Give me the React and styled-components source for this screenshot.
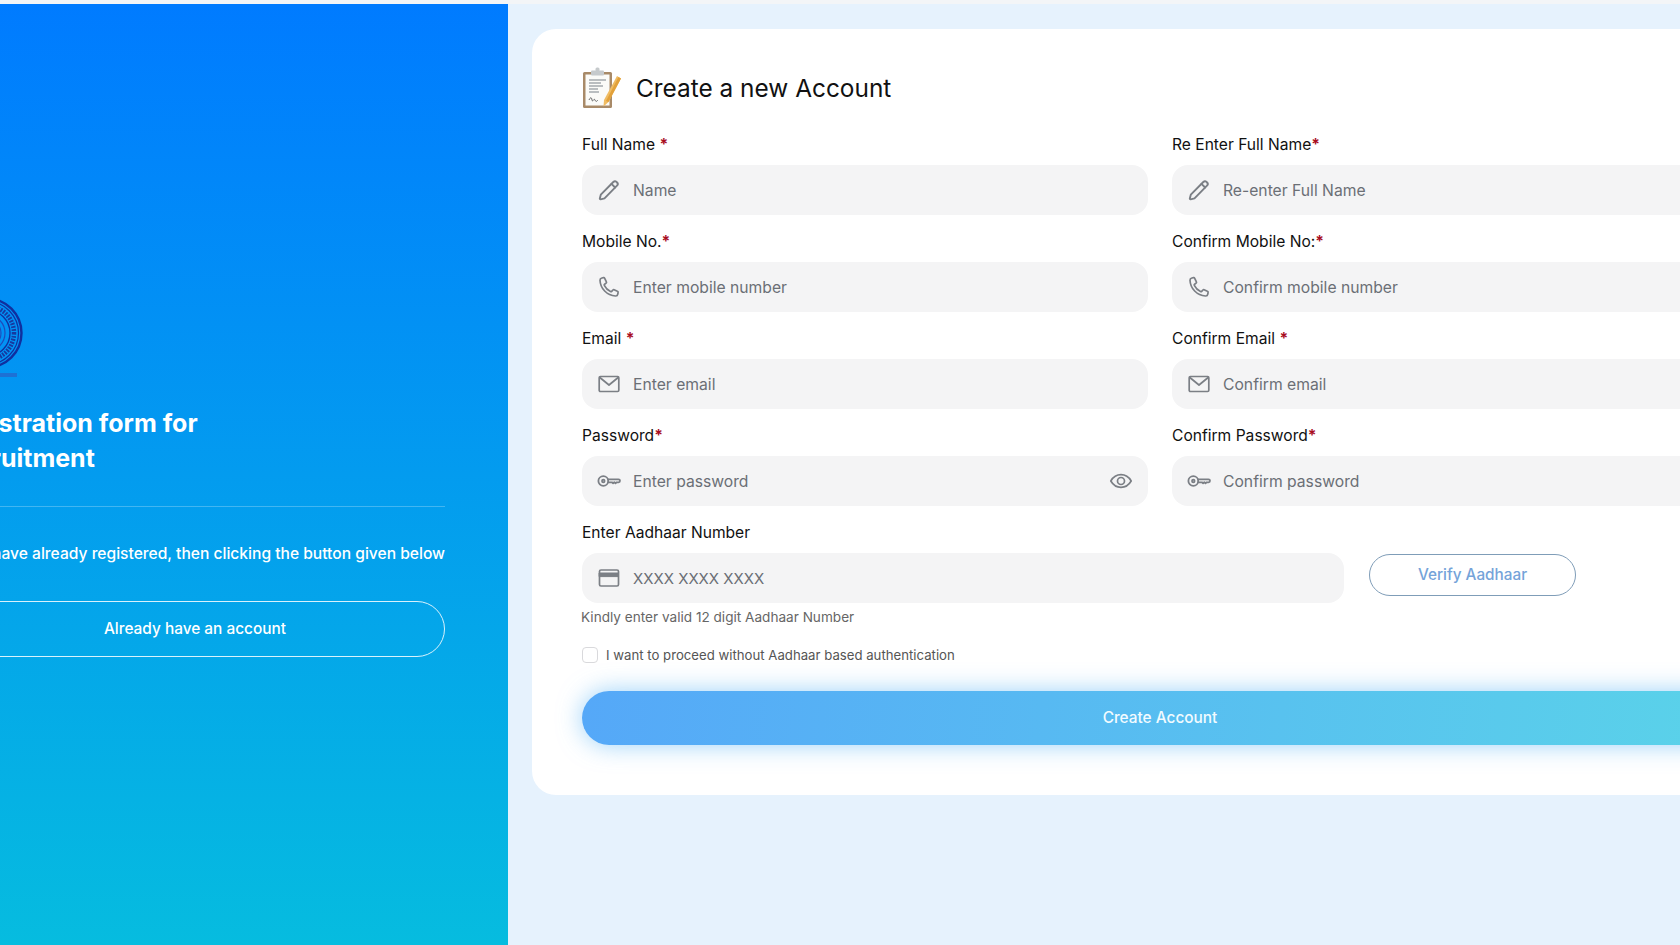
import styled, { createGlobalStyle } from "styled-components";

const GlobalStyle = createGlobalStyle`
    * {
        box-sizing: border-box;
    }

    html, body {
        margin: 0;
        padding: 0;
        height: 100%;
        overflow: hidden;
        background: #ffffff;
        font-family: Inter, "Noto Sans", sans-serif;
    }
`;

const stroke = { fill: "none", stroke: "#7b7f85", strokeWidth: 1.7, strokeLinecap: "round", strokeLinejoin: "round" };

function PencilIcon() {
    return (
        <FieldSvg viewBox="0 0 24 24" {...stroke} strokeWidth="1.9">
            <path d="M3.800 16.700 16.300 4c1-1 2.300-1 3.200-.1l.6.6c.9.900.9 2.200-.1 3.200L7.500 20.300l-3.900 1c-.5.1-.9-.3-.8-.8z" />
            <path d="m14.500 5.900 3.600 3.600" />
        </FieldSvg>
    );
}

function PhoneIcon() {
    return (
        <FieldSvg viewBox="0 0 24 24" {...stroke}>
            <path d="M3 5.200c0-1 .8-1.900 1.900-2.200l1.600-.3c.5-.1 1 .2 1.200.6l1.700 3.600c.2.400.1.900-.3 1.200L7.600 9.200c-.4.300-.5.800-.3 1.200 1.300 2.600 3.500 4.900 6.200 6.200.4.200.9.100 1.200-.2l1.200-1.400c.3-.4.800-.5 1.200-.3l3.300 1.600c.5.200.8.700.7 1.200l-.3 1.700c-.2 1.100-1.200 1.900-2.300 1.800C10 20.400 3.300 13.500 3 5.200z" />
        </FieldSvg>
    );
}

function MailIcon() {
    return (
        <FieldSvg viewBox="0 0 24 24" {...stroke}>
            <rect x="2.200" y="4.500" width="19.600" height="15" rx="1.200" />
            <path d="m2.800 5.500 9.200 7.500 9.200-7.500" />
        </FieldSvg>
    );
}

function KeyIcon() {
    return (
        <FieldSvg viewBox="0 0 24 24" {...stroke} strokeWidth="1.8">
            <circle cx="6.300" cy="12" r="4.900" />
            <circle cx="6.300" cy="12" r="1.300" />
            <path d="M11.200 10.300h10.300c.9 0 1.500.7 1.500 1.500s-.6 1.500-1.500 1.500h-1.800l-1.200 1-1.200-1-1.200 1-1.200-1h-3.700" />
        </FieldSvg>
    );
}

function CardIcon() {
    return (
        <FieldSvg viewBox="0 0 24 24" {...stroke}>
            <rect x="2.500" y="4" width="19" height="16" rx="1.500" />
            <rect x="2.500" y="7" width="19" height="3.600" fill="#7b7f85" strokeWidth="1" />
        </FieldSvg>
    );
}

function EyeIcon() {
    return (
        <FieldSvg viewBox="0 0 24 24" {...stroke}>
            <path d="M1.800 12C4.300 7.800 8 5.700 12 5.700s7.700 2.100 10.200 6.300c-2.500 4.200-6.200 6.300-10.200 6.300S4.300 16.200 1.800 12z" />
            <circle cx="12" cy="12" r="3.500" />
        </FieldSvg>
    );
}

function ClipboardIcon() {
    return (
        <svg width="40" height="42" viewBox="0 0 40 42">
            <rect x="1" y="5" width="29" height="36" rx="1.500" fill="#a88a68" />
            <rect x="3.500" y="7.500" width="24" height="31" fill="#fbfbf8" />
            <rect x="9" y="3.500" width="13" height="5" rx="1" fill="#c6cacc" />
            <rect x="13.500" y="0.500" width="4" height="4" rx="1.500" fill="#c6cacc" />
            <path d="M7 13h17M7 16h12M7 19h14M7 22h9M7 25h10" stroke="#7b8188" strokeWidth="1.200" fill="none" />
            <path d="M7 33c1.500-3 2.500-3 3 0s2-2.500 3 0 2 1 3 0" stroke="#666" strokeWidth="1" fill="none" />
            <path d="M22 33 35 9l4 2.500L26.500 35l-5 4.500z" fill="#f0bc62" />
            <path d="M24 34 36.500 10l2.500 1.500L26.500 35z" fill="#e2a13a" />
        </svg>
    );
}

function SealLogo() {
    return (
        <svg width="80" height="82" viewBox="0 0 80 82">
            <circle cx="40" cy="36" r="34.500" fill="none" stroke="#10309f" strokeWidth="2.400" />
            <circle cx="40" cy="36" r="31.500" fill="none" stroke="#10309f" strokeWidth="1.200" />
            <circle cx="40" cy="36" r="27" fill="none" stroke="#17399f" strokeWidth="4.500" strokeDasharray="1.800 1.200" />
            <circle cx="40" cy="36" r="23" fill="none" stroke="#10309f" strokeWidth="1.400" />
            <circle cx="40" cy="36" r="18" fill="none" stroke="#1f4cbc" strokeWidth="1.200" />
            <circle cx="40" cy="36" r="14" fill="none" stroke="#1f4cbc" strokeWidth="1.200" />
            <circle cx="40" cy="36" r="8" fill="#10309f" />
            <rect x="12" y="76" width="58" height="4" fill="#2a63c8" opacity="0.7" />
        </svg>
    );
}

const fields = [
    { label: "Full Name ", placeholder: "Name", Icon: PencilIcon },
    { label: "Re Enter Full Name", placeholder: "Re-enter Full Name", Icon: PencilIcon },
    { label: "Mobile No.", placeholder: "Enter mobile number", Icon: PhoneIcon },
    { label: "Confirm Mobile No:", placeholder: "Confirm mobile number", Icon: PhoneIcon },
    { label: "Email ", placeholder: "Enter email", Icon: MailIcon },
    { label: "Confirm Email ", placeholder: "Confirm email", Icon: MailIcon },
    { label: "Password", placeholder: "Enter password", Icon: KeyIcon, eye: true },
    { label: "Confirm Password", placeholder: "Confirm password", Icon: KeyIcon },
];

export default function App() {
    return (
        <Page>
            <GlobalStyle />
            <SidePanel>
                <SideContent>
                    <LogoWrap>
                        <SealLogo />
                    </LogoWrap>
                    <SideTitle>
                        Registration form for
                        <br />
                        Recruitment
                    </SideTitle>
                    <Divider />
                    <SideText>If you have already registered, then clicking the button given below</SideText>
                    <OutlineLink>Already have an account</OutlineLink>
                </SideContent>
            </SidePanel>

            <Main>
                <Card>
                    <Heading>
                        <ClipboardIcon />
                        <HeadingText>Create a new Account</HeadingText>
                    </Heading>

                    <FieldGrid>
                        {fields.map(({ label, placeholder, Icon, eye }) => (
                            <Field key={label}>
                                <Label>
                                    {label}
                                    <Required>*</Required>
                                </Label>
                                <InputBox>
                                    <Icon />
                                    <Input placeholder={placeholder} />
                                    {eye && <EyeIcon />}
                                </InputBox>
                            </Field>
                        ))}
                    </FieldGrid>

                    <Field>
                        <Label>Enter Aadhaar Number</Label>
                        <AadhaarRow>
                            <AadhaarBox>
                                <CardIcon />
                                <AadhaarInput placeholder="XXXX XXXX XXXX" />
                            </AadhaarBox>
                            <VerifyButton>Verify Aadhaar</VerifyButton>
                        </AadhaarRow>
                    </Field>
                    <Hint>Kindly enter valid 12 digit Aadhaar Number</Hint>

                    <CheckRow>
                        <CheckBox type="checkbox" />
                        I want to proceed without Aadhaar based authentication
                    </CheckRow>

                    <SubmitButton>Create Account</SubmitButton>
                </Card>
            </Main>
        </Page>
    );
}

const Page = styled.div`
    display: flex;
    width: 1680px;
    height: 945px;
    padding-top: 4px;
    overflow: hidden;
    background: #f3f5f7;
    color: #111;
`;

const SidePanel = styled.aside`
    flex: 0 0 508px;
    height: 100%;
    overflow: hidden;
    background: linear-gradient(180deg, #007bff 0%, #06bcdf 100%);
`;

const SideContent = styled.div`
    display: flex;
    flex-direction: column;
    width: 500px;
    margin-left: -55px;
    padding-top: 293px;
    color: #fff;
`;

const LogoWrap = styled.div`
    height: 82px;
    margin-left: 2px;
`;

const SideTitle = styled.h2`
    margin: 27px 0 0;
    font-size: 25px;
    line-height: 35px;
    font-weight: 700;
`;

const Divider = styled.div`
    height: 1px;
    margin-top: 30px;
    background: rgba(255, 255, 255, 0.25);
`;

const SideText = styled.p`
    margin: 37px 0 0;
    font-size: 15.600px;
    line-height: 20px;
    font-weight: 500;
    text-align: right;
    white-space: nowrap;
    direction: rtl;
    unicode-bidi: plaintext;
`;

const OutlineLink = styled.a`
    display: flex;
    align-items: center;
    justify-content: center;
    height: 56px;
    margin-top: 37px;
    padding-bottom: 1px;
    border: 1px solid rgba(255, 255, 255, 0.85);
    border-radius: 28px;
    font-size: 15.400px;
    font-weight: 500;
`;

const Main = styled.main`
    flex: 1;
    padding: 25px 0 0 24px;
    background: #e6f2fd;
`;

const Card = styled.section`
    width: 1256px;
    height: 766px;
    padding: 38px 50px 0;
    border-radius: 24px;
    background: #fff;
`;

const Heading = styled.div`
    display: flex;
    align-items: center;
    gap: 14px;
    height: 42px;
    margin-bottom: 27px;
`;

const HeadingText = styled.h1`
    margin: 0;
    font-size: 24.400px;
    font-weight: 400;
    color: #111;
`;

const FieldGrid = styled.div`
    display: grid;
    grid-template-columns: 566px 566px;
    column-gap: 24px;
    row-gap: 18px;
    margin-bottom: 18px;
`;

const Field = styled.div`
    display: flex;
    flex-direction: column;
    gap: 11px;
`;

const Label = styled.label`
    height: 18px;
    font-size: 15.600px;
    line-height: 18px;
    color: #111;
`;

const Required = styled.span`
    color: #a80d1e;
    font-weight: 700;
`;

const InputBox = styled.div`
    display: flex;
    align-items: center;
    gap: 10px;
    height: 50px;
    padding: 0 15px;
    border-radius: 16px;
    background: #f4f4f5;
`;

const AadhaarRow = styled.div`
    display: flex;
    align-items: flex-start;
    gap: 25px;
`;

const AadhaarBox = styled(InputBox)`
    width: 762px;
`;

const FieldSvg = styled.svg`
    flex: none;
    width: 24px;
    height: 24px;
`;

const Input = styled.input`
    flex: 1;
    min-width: 0;
    border: 0;
    outline: 0;
    background: transparent;
    font: 400 15.700px Inter, "Noto Sans", sans-serif;
    color: #333;

    &::placeholder {
        color: #6b6f75;
        opacity: 1;
    }
`;

const AadhaarInput = styled(Input)`
    font-size: 15px;
`;

const VerifyButton = styled.button`
    width: 207px;
    height: 42px;
    margin-top: 1px;
    padding-bottom: 3px;
    border: 1px solid #7f9db8;
    border-radius: 21px;
    background: #fff;
    font: 500 15.300px Inter, "Noto Sans", sans-serif;
    color: #74a3d9;
`;

const Hint = styled.div`
    margin-top: 6px;
    margin-left: -1px;
    font-size: 13.600px;
    line-height: 16px;
    color: #666;
`;

const CheckRow = styled.label`
    display: flex;
    align-items: center;
    gap: 8px;
    margin-top: 20px;
    font-size: 13.200px;
    line-height: 20px;
    color: #555;
`;

const CheckBox = styled.input`
    appearance: none;
    flex: none;
    width: 16px;
    height: 16px;
    margin: 0;
    border: 1px solid #d9d9dc;
    border-radius: 4px;
    background: #fff;
`;

const SubmitButton = styled.button`
    display: block;
    width: 100%;
    height: 54px;
    margin-top: 26px;
    padding-bottom: 3px;
    border: 0;
    border-radius: 27px;
    background: linear-gradient(96deg, #55a8f8 0%, #5ad3e9 100%);
    box-shadow: 0 0 24px rgba(90, 180, 245, 0.6);
    font: 500 15.400px Inter, "Noto Sans", sans-serif;
    color: #f2fbff;
`;
